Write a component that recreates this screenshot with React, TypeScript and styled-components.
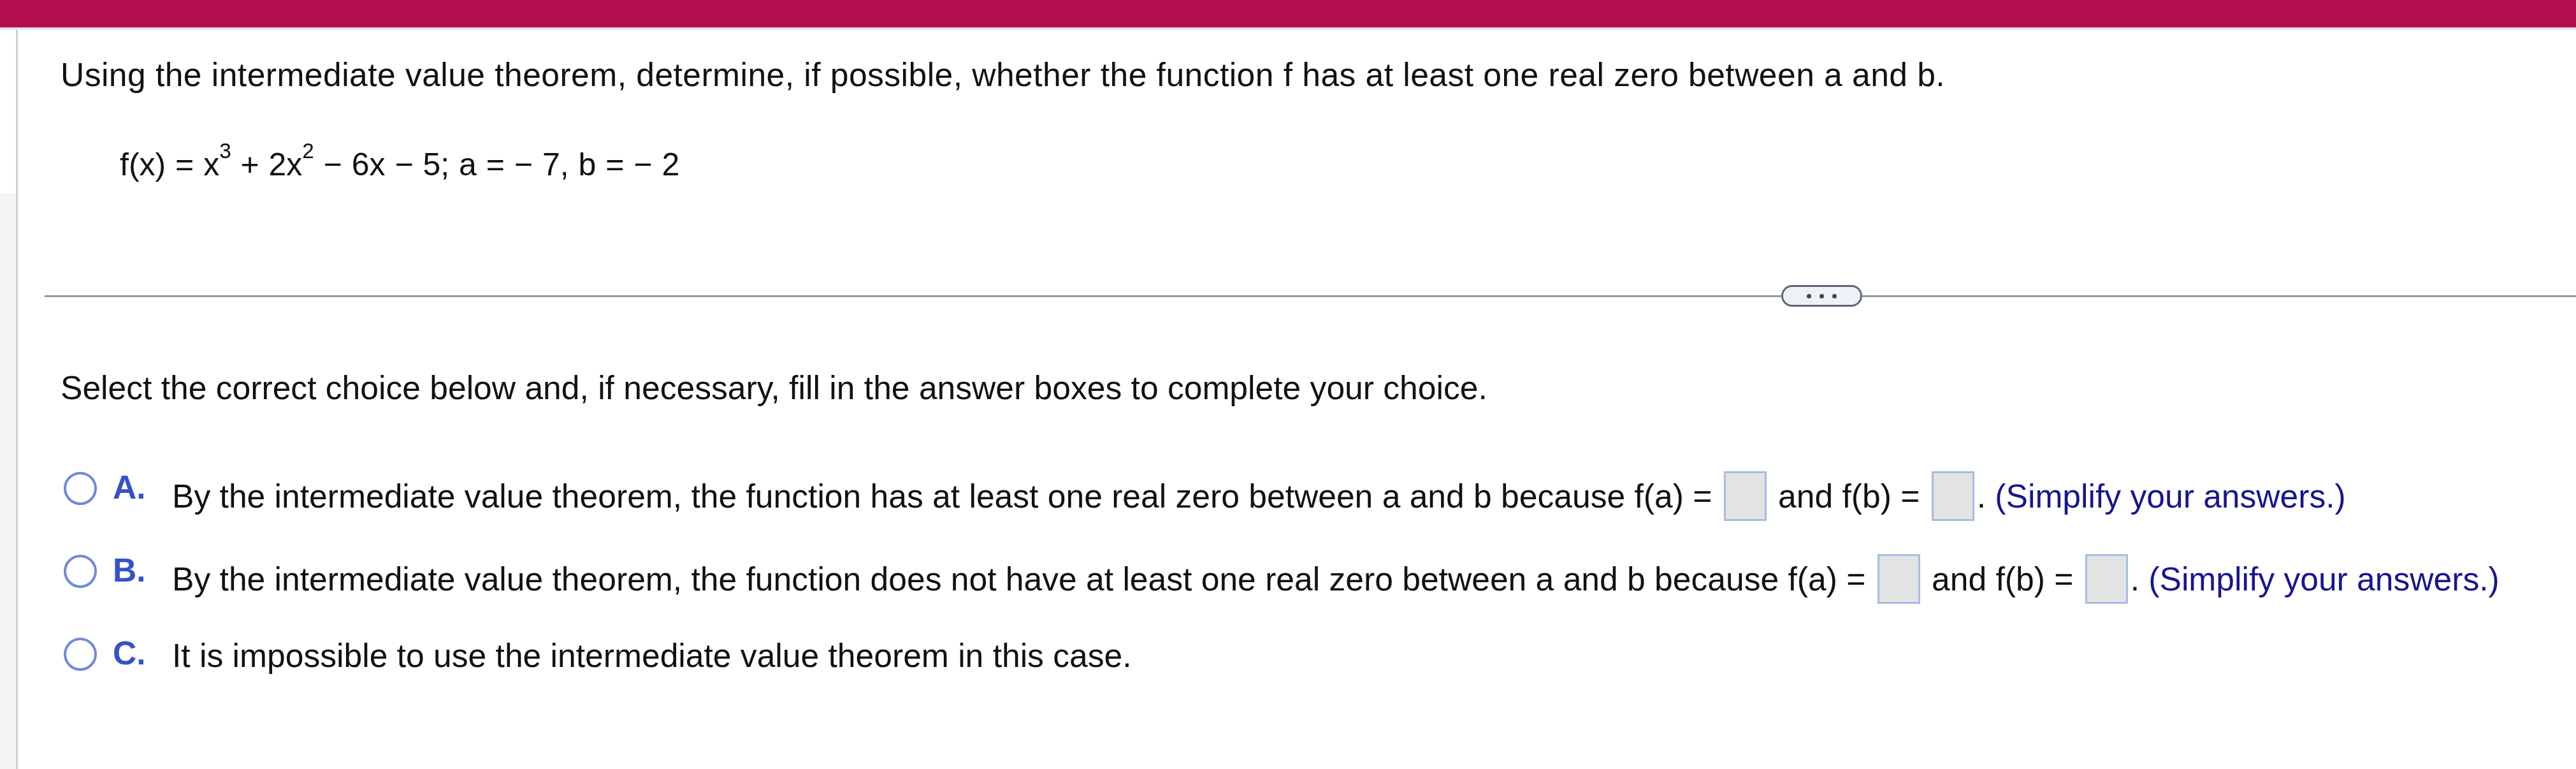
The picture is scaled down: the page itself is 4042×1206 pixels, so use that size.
import styled, { createGlobalStyle } from "styled-components"

const GlobalStyle = createGlobalStyle`
  html, body {
    margin: 0;
    padding: 0;
    background: #fff;
  }
  body {
    font-family: "Liberation Sans", Arial, Helvetica, sans-serif;
    color: #111;
  }
`

const Page = styled.div`
  width: 4042px;
  height: 1206px;
  display: flex;
  flex-direction: column;
  overflow: hidden;
`

const TopBar = styled.div`
  flex: none;
  height: 43px;
  background: #b20e4d;
  border-bottom: 4px solid #dfe5ec;
`

const Body = styled.div`
  flex: 1;
  display: flex;
`

const Gutter = styled.div`
  flex: none;
  width: 25px;
  display: flex;
  flex-direction: column;
  border-right: 3px solid #cdd1d7;
`

const GutterTop = styled.div`
  height: 256px;
  background: #fff;
`

const GutterRest = styled.div`
  flex: 1;
  background: #f4f5f7;
`

const Main = styled.div`
  flex: 1;
  padding-left: 42px;
`

const Question = styled.div`
  padding: 41px 0 0 25px;
`

const Prompt = styled.div<{ $top?: number; $spacing?: number }>`
  font-size: 51.6px;
  line-height: 59px;
  margin-top: ${({ $top }) => $top ?? 0}px;
  letter-spacing: ${({ $spacing }) => $spacing ?? 0}px;
  white-space: nowrap;
`

const Equation = styled.div`
  margin: 83px 0 0 93px;
  font-size: 50px;
  line-height: 57px;
  word-spacing: 1px;
  white-space: pre;
`

const Sup = styled.sup`
  font-size: 33px;
  line-height: 0;
  vertical-align: 27px;
`

const SeparatorRow = styled.div`
  margin-top: 160px;
  height: 34px;
  display: flex;
  align-items: center;
`

const Rule = styled.div<{ $width?: number }>`
  height: 3px;
  background: #8e97a5;
  ${({ $width }) => ($width ? `flex: none; width: ${$width}px;` : "flex: 1;")}
`

const MorePill = styled.div`
  flex: none;
  box-sizing: border-box;
  width: 127px;
  height: 34px;
  border: 3px solid #5d6876;
  border-radius: 17px;
  background: #eef1f5;
  display: flex;
  align-items: center;
  justify-content: center;
  gap: 13px;
`

const Dot = styled.span`
  width: 7px;
  height: 7px;
  border-radius: 50%;
  background: #3f4651;
`

const SelectSection = styled.div`
  padding-left: 25px;
`

const Choices = styled.div`
  margin-top: 101px;
  padding-left: 30px;
  display: flex;
  flex-direction: column;
  gap: 52px;
`

const ChoiceRow = styled.div`
  display: flex;
  align-items: flex-start;
`

const Radio = styled.span`
  flex: none;
  box-sizing: border-box;
  width: 52px;
  height: 52px;
  margin-top: 1px;
  border-radius: 50%;
  border: 4.5px solid #7089d9;
  background: #fff;
`

const Letter = styled.span`
  flex: none;
  width: 93px;
  margin: -4px 0 0 25px;
  font-size: 51.6px;
  line-height: 59px;
  font-weight: 700;
  color: #3651c9;
`

const ChoiceText = styled.div`
  display: flex;
  align-items: center;
  font-size: 51.6px;
  line-height: 59px;
  white-space: pre;
`

const AnswerBox = styled.span`
  flex: none;
  box-sizing: border-box;
  width: 67px;
  height: 78px;
  margin: 0 4px;
  border: 3px solid #a8bce3;
  background: #e3e3e3;
`

const Hint = styled.span`
  color: #16168e;
`

const Choice = ({ letter, children }: { letter: string; children: any }) => (
  <ChoiceRow>
    <Radio />
    <Letter>{letter}.</Letter>
    <ChoiceText>{children}</ChoiceText>
  </ChoiceRow>
)

const App = () => {
  return (
    <>
      <GlobalStyle />
      <Page>
        <TopBar />
        <Body>
          <Gutter>
            <GutterTop />
            <GutterRest />
          </Gutter>
          <Main>
            <Question>
              <Prompt $spacing={0.45}>
                Using the intermediate value theorem, determine, if possible, whether the function f has at least one real zero between a and b.
              </Prompt>
              <Equation>
                f(x) = x<Sup>3</Sup> + 2x<Sup>2</Sup> − 6x − 5; a = − 7, b = − 2
              </Equation>
            </Question>

            <SeparatorRow>
              <Rule $width={2725} />
              <MorePill>
                <Dot />
                <Dot />
                <Dot />
              </MorePill>
              <Rule />
            </SeparatorRow>

            <SelectSection>
              <Prompt $top={98}>
                Select the correct choice below and, if necessary, fill in the answer boxes to complete your choice.
              </Prompt>
            </SelectSection>

            <Choices>
              <Choice letter="A">
                <span>By the intermediate value theorem, the function has at least one real zero between a and b because f(a) = </span>
                <AnswerBox />
                <span> and f(b) = </span>
                <AnswerBox />
                <span>. </span>
                <Hint>(Simplify your answers.)</Hint>
              </Choice>
              <Choice letter="B">
                <span>By the intermediate value theorem, the function does not have at least one real zero between a and b because f(a) = </span>
                <AnswerBox />
                <span> and f(b) = </span>
                <AnswerBox />
                <span>. </span>
                <Hint>(Simplify your answers.)</Hint>
              </Choice>
              <Choice letter="C">
                <span>It is impossible to use the intermediate value theorem in this case.</span>
              </Choice>
            </Choices>
          </Main>
        </Body>
      </Page>
    </>
  )
}

export default App
